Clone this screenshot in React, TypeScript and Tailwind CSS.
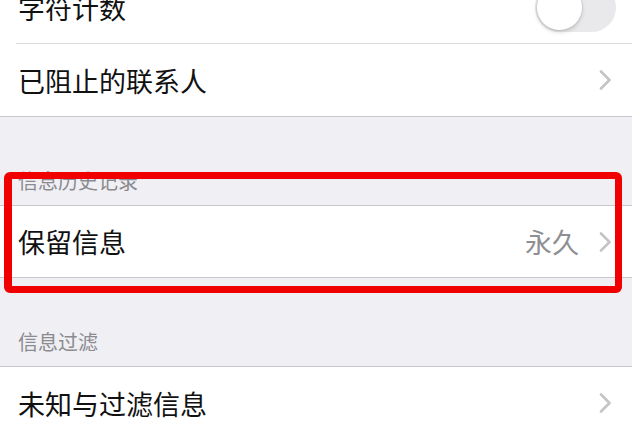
const Chevron = () => (
  <svg width="13" height="20" viewBox="0 0 13 20" className="shrink-0">
    <path d="M2 1.5 L10.5 10 L2 18.5" fill="none" stroke="#c4c4c9" strokeWidth="2.6" strokeLinecap="round" strokeLinejoin="round" />
  </svg>
);

const Row = ({ label, value, tall = true }: { label: string; value?: string; tall?: boolean }) => (
  <div className={`flex items-center justify-between pl-[18px] pr-[20px] ${tall ? "h-[72px]" : "h-[71px]"}`}>
    <span className="text-[27px] leading-none text-[#111]">{label}</span>
    <div className="flex items-center gap-[20px]">
      {value && <span className="text-[27px] leading-none text-[#8e8e93]">{value}</span>}
      <Chevron />
    </div>
  </div>
);

const Header = ({ title }: { title: string }) => (
  <div className="flex h-[88px] items-end pb-[10px] pl-[18px]">
    <span className="text-[20px] leading-[28px] text-[#8a8a8f]">{title}</span>
  </div>
);

const Toggle = () => (
  <div className="relative -mr-[2px] h-[49px] w-[81px] rounded-full bg-[#e9e9eb]">
    <div className="absolute left-[2px] top-[2px] h-[45px] w-[45px] rounded-full bg-white shadow-[0_2px_4px_rgba(0,0,0,0.18),0_0_0_1px_rgba(0,0,0,0.04)]" />
  </div>
);

export default function App() {
  return (
    <div
      className="relative h-[423px] w-full overflow-hidden bg-[#efeff4]"
      style={{ fontFamily: '"Noto Sans CJK SC", "Noto Sans", sans-serif' }}
    >
      <div className="-mt-[29px] flex flex-col">
        {/* Group 1 */}
        <div className="border-b border-[#c8c7cc] bg-white">
          <div className="flex h-[72px] items-center justify-between pl-[18px] pr-[18px]">
            <span className="text-[27px] leading-none text-[#111]">字符计数</span>
            <Toggle />
          </div>
          <div className="ml-[16px] h-px bg-[#dcdce0]" />
          <Row label="已阻止的联系人" />
        </div>

        <Header title="信息历史记录" />
        <div className="border-y border-[#c8c7cc] bg-white">
          <Row label="保留信息" value="永久" tall={false} />
        </div>

        <Header title="信息过滤" />
        <div className="border-y border-[#c8c7cc] bg-white">
          <Row label="未知与过滤信息" />
        </div>
      </div>

      {/* red annotation box */}
      <div className="pointer-events-none absolute left-[4px] top-[172px] h-[121px] w-[618px] rounded-[6px] border-[7px] border-l-[8px] border-[#f00000]" />
    </div>
  );
}
